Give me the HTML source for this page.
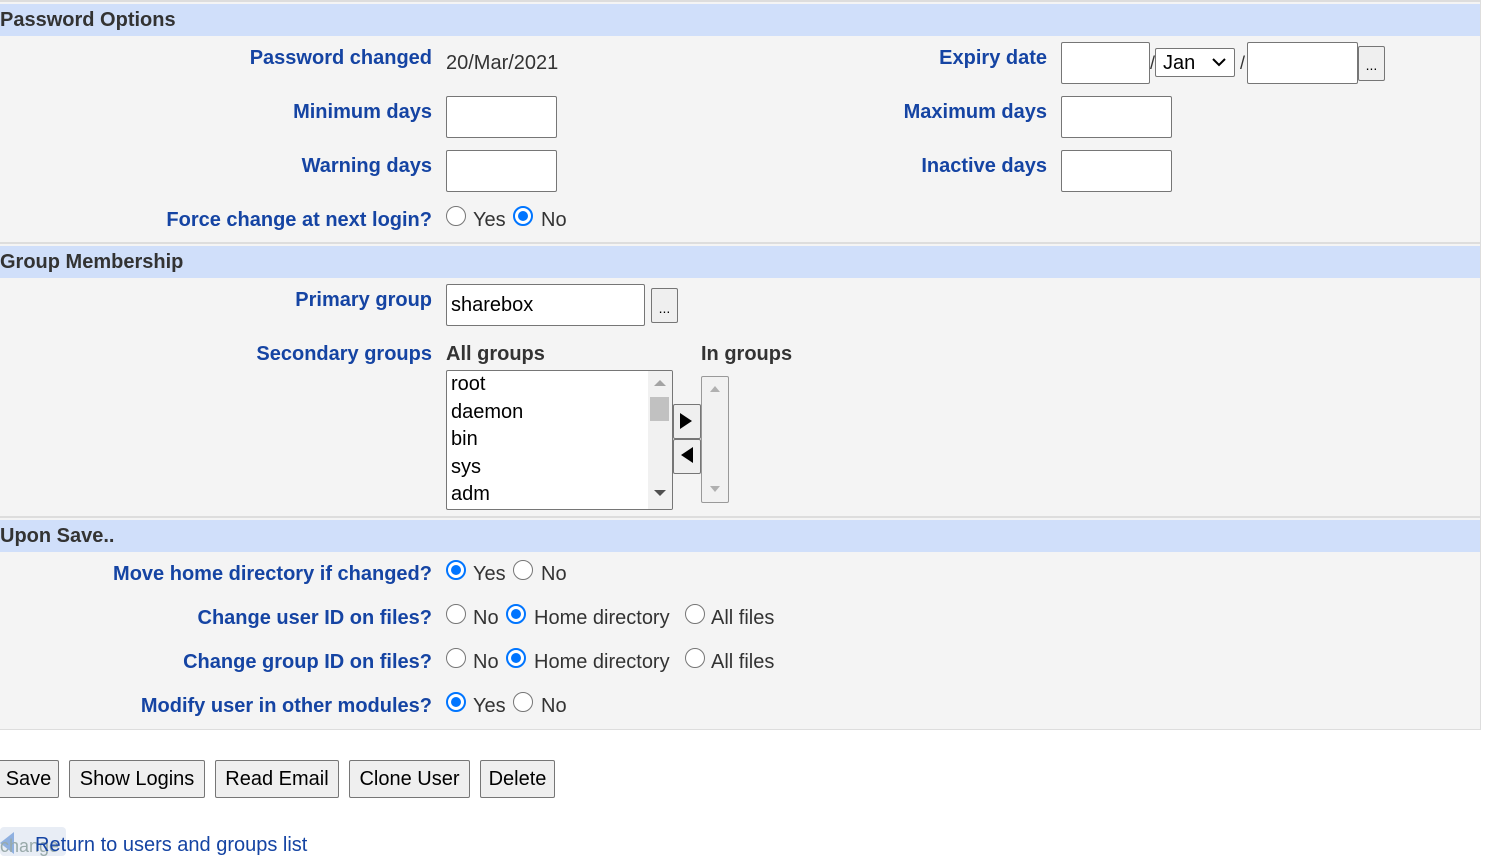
<!DOCTYPE html>
<html><head><meta charset="utf-8"><style>
*{box-sizing:border-box;margin:0;padding:0}
body{width:1496px;height:856px;background:#fff;font-family:"Liberation Sans",Arial,sans-serif;position:relative;overflow:hidden;color:#333}
.a{position:absolute;white-space:nowrap}
.panel{position:absolute;left:0;width:1481px;background:#f4f4f4;border-right:1px solid #ddd;border-top:2px solid #ddd;border-bottom:1px solid #ddd}
.band{position:absolute;left:0;width:1480px;height:32px;background:#d0dffa;font-size:20px;font-weight:bold;color:#333;line-height:32px}
.lb{position:absolute;right:1064px;font-size:20px;font-weight:bold;color:#1544a3;white-space:nowrap;line-height:24px}
.lb2{position:absolute;right:449px;font-size:20px;font-weight:bold;color:#1544a3;white-space:nowrap;line-height:24px}
.t{position:absolute;font-size:20px;line-height:24px;color:#333;white-space:nowrap}
.in{position:absolute;background:#fff;border:1px solid #767676;border-radius:2px}
.btn{position:absolute;background:#efefef;border:1px solid #767676;border-radius:2px;font-size:20px;color:#000;text-align:center}
.r{position:absolute;width:20px;height:20px;border-radius:50%;border:1px solid #767676;background:#fff}
.r.c{border:2px solid #0075ff}
.r.c:after{content:"";position:absolute;left:3px;top:3px;width:10px;height:10px;border-radius:50%;background:#0075ff}
</style></head><body>
<div class="panel" style="top:0;height:244px"></div>
<div class="band" style="top:4px">Password Options</div>
<div class="lb" style="top:46px">Password changed</div>
<div class="t" style="left:446px;top:51px">20/Mar/2021</div>
<div class="lb" style="top:100px">Minimum days</div>
<div class="in" style="left:446px;top:96px;width:111px;height:42px"></div>
<div class="lb" style="top:154px">Warning days</div>
<div class="in" style="left:446px;top:150px;width:111px;height:42px"></div>
<div class="lb" style="top:208px">Force change at next login?</div>
<div class="r" style="left:446px;top:206px"></div><div class="t" style="left:473px;top:208px">Yes</div>
<div class="r c" style="left:513px;top:206px"></div><div class="t" style="left:541px;top:208px">No</div>

<div class="lb2" style="top:46px">Expiry date</div>
<div class="in" style="left:1061px;top:42px;width:89px;height:42px"></div>
<div class="t" style="left:1150px;top:51px;font-size:18px">/</div>
<div class="in" style="left:1155px;top:48px;width:80px;height:29px;border-radius:2px"></div>
<div class="t" style="left:1163px;top:51px;color:#000">Jan</div>
<svg class="a" style="left:1212px;top:57px" width="14" height="10"><path d="M1 2l6 6 6-6" fill="none" stroke="#000" stroke-width="2"/></svg>
<div class="t" style="left:1240px;top:51px;font-size:18px">/</div>
<div class="in" style="left:1247px;top:42px;width:111px;height:42px"></div>
<div class="btn" style="left:1358px;top:46px;width:27px;height:35px;font-size:14px;line-height:36px">...</div>
<div class="lb2" style="top:100px">Maximum days</div>
<div class="in" style="left:1061px;top:96px;width:111px;height:42px"></div>
<div class="lb2" style="top:154px">Inactive days</div>
<div class="in" style="left:1061px;top:150px;width:111px;height:42px"></div>

<div class="panel" style="top:242px;height:276px"></div>
<div class="band" style="top:246px">Group Membership</div>
<div class="lb" style="top:288px">Primary group</div>
<div class="in" style="left:446px;top:284px;width:199px;height:42px"></div>
<div class="t" style="left:451px;top:293px;color:#000">sharebox</div>
<div class="btn" style="left:651px;top:288px;width:27px;height:35px;font-size:14px;line-height:38px">...</div>
<div class="lb" style="top:342px">Secondary groups</div>
<div class="t" style="left:446px;top:342px;font-weight:bold">All groups</div>
<div class="t" style="left:701px;top:342px;font-weight:bold">In groups</div>
<div class="in" style="left:446px;top:370px;width:227px;height:140px;overflow:hidden">
 <div class="t" style="left:4px;top:0;color:#000;line-height:27.5px">root<br>daemon<br>bin<br>sys<br>adm</div>
 <div style="position:absolute;right:0;top:0;width:24px;height:138px;background:#f1f1f1"></div>
 <div style="position:absolute;right:3px;top:26px;width:19px;height:24px;background:#c1c1c1"></div>
 <svg style="position:absolute;right:6px;top:8px" width="12" height="7"><path d="M0 7L6 1 12 7z" fill="#a3a3a3"/></svg>
 <svg style="position:absolute;right:6px;top:119px" width="12" height="7"><path d="M0 0L6 6 12 0z" fill="#505050"/></svg>
</div>
<div class="btn" style="left:673px;top:404px;width:28px;height:35px"></div>
<svg class="a" style="left:679px;top:413px" width="14" height="16"><path d="M1 0L13 8 1 16z" fill="#000"/></svg>
<div class="btn" style="left:673px;top:439px;width:28px;height:35px"></div>
<svg class="a" style="left:680px;top:447px" width="14" height="16"><path d="M13 0L1 8 13 16z" fill="#000"/></svg>
<div class="in" style="left:701px;top:376px;width:28px;height:127px;background:#f1f1f1;border-color:#999"></div>
<svg class="a" style="left:710px;top:386px" width="10" height="6"><path d="M0 6L5 0 10 6z" fill="#b0b0b0"/></svg>
<svg class="a" style="left:710px;top:486px" width="10" height="6"><path d="M0 0L5 6 10 0z" fill="#b0b0b0"/></svg>

<div class="panel" style="top:516px;height:214px"></div>
<div class="band" style="top:520px">Upon Save..</div>
<div class="lb" style="top:562px">Move home directory if changed?</div>
<div class="r c" style="left:446px;top:560px"></div><div class="t" style="left:473px;top:562px">Yes</div>
<div class="r" style="left:513px;top:560px"></div><div class="t" style="left:541px;top:562px">No</div>
<div class="lb" style="top:606px">Change user ID on files?</div>
<div class="r" style="left:446px;top:604px"></div><div class="t" style="left:473px;top:606px">No</div>
<div class="r c" style="left:506px;top:604px"></div><div class="t" style="left:534px;top:606px">Home directory</div>
<div class="r" style="left:685px;top:604px"></div><div class="t" style="left:711px;top:606px">All files</div>
<div class="lb" style="top:650px">Change group ID on files?</div>
<div class="r" style="left:446px;top:648px"></div><div class="t" style="left:473px;top:650px">No</div>
<div class="r c" style="left:506px;top:648px"></div><div class="t" style="left:534px;top:650px">Home directory</div>
<div class="r" style="left:685px;top:648px"></div><div class="t" style="left:711px;top:650px">All files</div>
<div class="lb" style="top:694px">Modify user in other modules?</div>
<div class="r c" style="left:446px;top:692px"></div><div class="t" style="left:473px;top:694px">Yes</div>
<div class="r" style="left:513px;top:692px"></div><div class="t" style="left:541px;top:694px">No</div>

<div class="btn" style="left:-2px;top:760px;width:61px;height:38px;line-height:36px">Save</div>
<div class="btn" style="left:69px;top:760px;width:136px;height:38px;line-height:36px">Show Logins</div>
<div class="btn" style="left:215px;top:760px;width:124px;height:38px;line-height:36px">Read Email</div>
<div class="btn" style="left:349px;top:760px;width:121px;height:38px;line-height:36px">Clone User</div>
<div class="btn" style="left:480px;top:760px;width:75px;height:38px;line-height:36px">Delete</div>

<div class="a" style="left:0;top:827px;width:66px;height:29px;background:#e8edf5;border-radius:4px"></div>
<svg class="a" style="left:0;top:830px" width="22" height="26"><path d="M0 13L14 2V24z" fill="#8fb0e0"/></svg>
<div class="t" style="left:0;top:834px;font-size:18px;color:#9aa">change</div>
<div class="t" style="left:35px;top:833px;color:#1544a3">Return to users and groups list</div>
</body></html>
